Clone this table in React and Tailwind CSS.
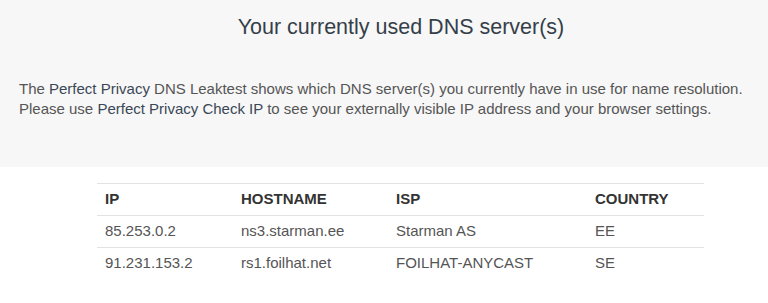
import React from 'react'

const rows = [
  { ip: '85.253.0.2', host: 'ns3.starman.ee', isp: 'Starman AS', country: 'EE' },
  { ip: '91.231.153.2', host: 'rs1.foilhat.net', isp: 'FOILHAT-ANYCAST', country: 'SE' },
]

function Cell({ children, head }) {
  return (
    <div className={`h-[32px] flex items-center px-2 border-t border-[#e3e3e3] ${head ? 'font-bold text-[#333]' : 'text-[#555]'}`}>
      {children}
    </div>
  )
}

export default function App() {
  return (
    <div className="w-[768px] h-[303px] bg-white font-['Liberation_Sans',Arial,sans-serif]">
      <section className="h-[167px] bg-[#f7f7f7] pt-[11px]">
        <h1 className="pl-[34px] text-center text-[21.5px] leading-[32px] text-[#353f4a]">
          Your currently used DNS server(s)
        </h1>
        <p className="mt-[36px] px-[19px] text-[15px] leading-[20px] text-[#555]">
          The <a className="text-[#3a4756]">Perfect Privacy</a> DNS Leaktest shows which DNS server(s) you currently have in use for name resolution.
          <br />
          Please use <a className="text-[#3a4756]">Perfect Privacy Check IP</a> to see your externally visible IP address and your browser settings.
        </p>
      </section>

      <div className="ml-[97px] mt-[16px] w-[607px] grid grid-cols-[136px_155px_199px_117px] text-[15px]">
        <Cell head>IP</Cell>
        <Cell head>HOSTNAME</Cell>
        <Cell head>ISP</Cell>
        <Cell head>COUNTRY</Cell>
        {rows.map((r) => (
          <React.Fragment key={r.ip}>
            <Cell>{r.ip}</Cell>
            <Cell>{r.host}</Cell>
            <Cell>{r.isp}</Cell>
            <Cell>{r.country}</Cell>
          </React.Fragment>
        ))}
      </div>
    </div>
  )
}
